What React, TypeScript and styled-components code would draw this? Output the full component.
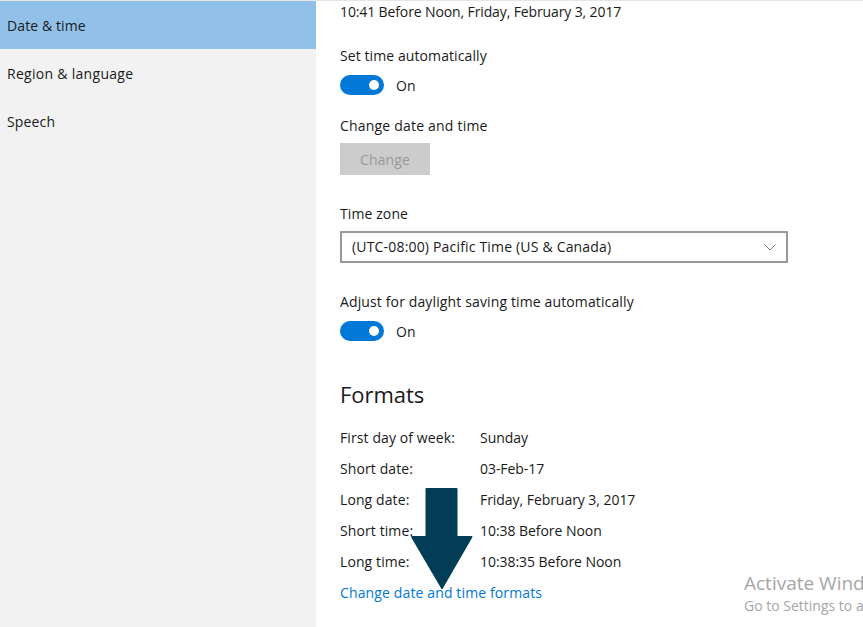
import React from "react";
import styled, { createGlobalStyle } from "styled-components";

const Global = createGlobalStyle`
  html, body { margin: 0; padding: 0; background: #fff; }
  body { width: 863px; height: 627px; overflow: hidden; font-family: "Open Sans", "Noto Sans", "Liberation Sans", sans-serif; }
`;

const Page = styled.div`
  position: relative;
  display: flex;
  width: 863px;
  height: 627px;
  box-sizing: border-box;
  border-top: 1px solid #e6e6e6;
  overflow: hidden;
  background: #fff;
  color: #1a1a1a;
  font-size: 14px;
  line-height: 20px;
`;

const Sidebar = styled.nav`
  display: flex;
  flex-direction: column;
  flex: 0 0 316px;
  box-sizing: border-box;
  background: #f2f2f2;
`;

const NavItem = styled.div<{ $active?: boolean; $track?: number }>`
  display: flex;
  align-items: center;
  height: 48px;
  padding: 2px 0 0 7px;
  box-sizing: border-box;
  letter-spacing: ${(p) => p.$track ?? 0}px;
  background: ${(p) => (p.$active ? "#91c1e8" : "transparent")};
`;

const Main = styled.main`
  display: flex;
  flex-direction: column;
  align-items: flex-start;
  flex: 1;
  padding: 1px 0 0 24px;
`;

const Text = styled.div<{ $top?: number; $track?: number }>`
  margin-top: ${(p) => p.$top ?? 0}px;
  letter-spacing: ${(p) => p.$track ?? 0}px;
`;

const ToggleRow = styled.div`
  display: flex;
  align-items: center;
  gap: 12px;
  height: 20px;
  margin-top: 9px;
  margin-bottom: 1px;
`;

const Track = styled.div`
  display: flex;
  align-items: center;
  justify-content: flex-end;
  width: 44px;
  height: 20px;
  padding-right: 5px;
  box-sizing: border-box;
  border-radius: 10px;
  background: #0078d7;
`;

const Knob = styled.div`
  width: 10px;
  height: 10px;
  border-radius: 50%;
  background: #fff;
`;

const ToggleLabel = styled.span`
  position: relative;
  top: 1px;
`;

const DisabledButton = styled.div`
  display: flex;
  align-items: center;
  justify-content: center;
  width: 90px;
  height: 32px;
  margin-top: 7px;
  padding-top: 2px;
  box-sizing: border-box;
  background: #cccccc;
  color: #999999;
  letter-spacing: 0.1px;
`;

const Select = styled.div`
  display: flex;
  align-items: center;
  justify-content: space-between;
  width: 448px;
  height: 32px;
  margin-top: 7px;
  padding: 0 10px 0 10px;
  box-sizing: border-box;
  border: 2px solid #999999;
  letter-spacing: 0.18px;
`;

const Heading = styled.h2`
  margin: 37px 0 1px;
  font-size: 22px;
  font-weight: 400;
  line-height: 30px;
  letter-spacing: -0.05px;
`;

const FormatGrid = styled.dl`
  display: grid;
  grid-template-columns: 140px auto;
  row-gap: 11px;
  margin: 18px 0 0;
`;

const Term = styled.dt`
  margin: 0;
  letter-spacing: 0.1px;
`;

const Value = styled.dd`
  margin: 0;
  letter-spacing: -0.05px;
`;

const FormatLink = styled.a`
  margin-top: 11px;
  color: #0078d7;
  text-decoration: none;
  letter-spacing: 0.13px;
`;

const ArrowOverlay = styled.svg`
  position: absolute;
  left: 410px;
  top: 486px;
`;

const Watermark = styled.div`
  position: absolute;
  left: 744px;
  top: 569px;
  width: 119px;
  overflow: hidden;
  white-space: nowrap;
  color: #a6a6a6;
`;

const WatermarkTitle = styled.div`
  font-size: 19px;
  line-height: 26px;
`;

const WatermarkSub = styled.div`
  font-size: 14px;
  line-height: 20px;
`;

function Toggle() {
  return (
    <ToggleRow>
      <Track>
        <Knob />
      </Track>
      <ToggleLabel>On</ToggleLabel>
    </ToggleRow>
  );
}

const formats: [string, string][] = [
  ["First day of week:", "Sunday"],
  ["Short date:", "03-Feb-17"],
  ["Long date:", "Friday, February 3, 2017"],
  ["Short time:", "10:38 Before Noon"],
  ["Long time:", "10:38:35 Before Noon"],
];

export default function App() {
  return (
    <Page>
      <Global />
      <Sidebar>
        <NavItem $active $track={0.1}>Date &amp; time</NavItem>
        <NavItem $track={0.29}>Region &amp; language</NavItem>
        <NavItem $track={0.15}>Speech</NavItem>
      </Sidebar>
      <Main>
        <Text $track={-0.12}>10:41 Before Noon, Friday, February 3, 2017</Text>
        <Text $top={24} $track={0.09}>Set time automatically</Text>
        <Toggle />
        <Text $top={20} $track={0.2}>Change date and time</Text>
        <DisabledButton>Change</DisabledButton>
        <Text $top={29} $track={0.1}>Time zone</Text>
        <Select>
          <span>(UTC-08:00) Pacific Time (US &amp; Canada)</span>
          <svg width="12" height="7" viewBox="0 0 12 7" fill="none" stroke="#808080" strokeWidth="1">
            <path d="M0.5 0.5l5.5 5.5 5.5-5.5" />
          </svg>
        </Select>
        <Text $top={29} $track={0.13}>Adjust for daylight saving time automatically</Text>
        <Toggle />
        <Heading>Formats</Heading>
        <FormatGrid>
          {formats.map(([k, v]) => (
            <React.Fragment key={k}>
              <Term>{k}</Term>
              <Value>{v}</Value>
            </React.Fragment>
          ))}
        </FormatGrid>
        <FormatLink href="#">Change date and time formats</FormatLink>
      </Main>
      <ArrowOverlay width="64" height="104" viewBox="0 0 64 104">
        <path d="M15.5 2q0-1 1-1h30q1 0 1 1v47h14q1 0 1 1l-30 52h-1L1 50q0-1 1-1h13.5z" fill="#023d58" />
      </ArrowOverlay>
      <Watermark>
        <WatermarkTitle>Activate Windows</WatermarkTitle>
        <WatermarkSub>Go to Settings to activate Windows.</WatermarkSub>
      </Watermark>
    </Page>
  );
}
